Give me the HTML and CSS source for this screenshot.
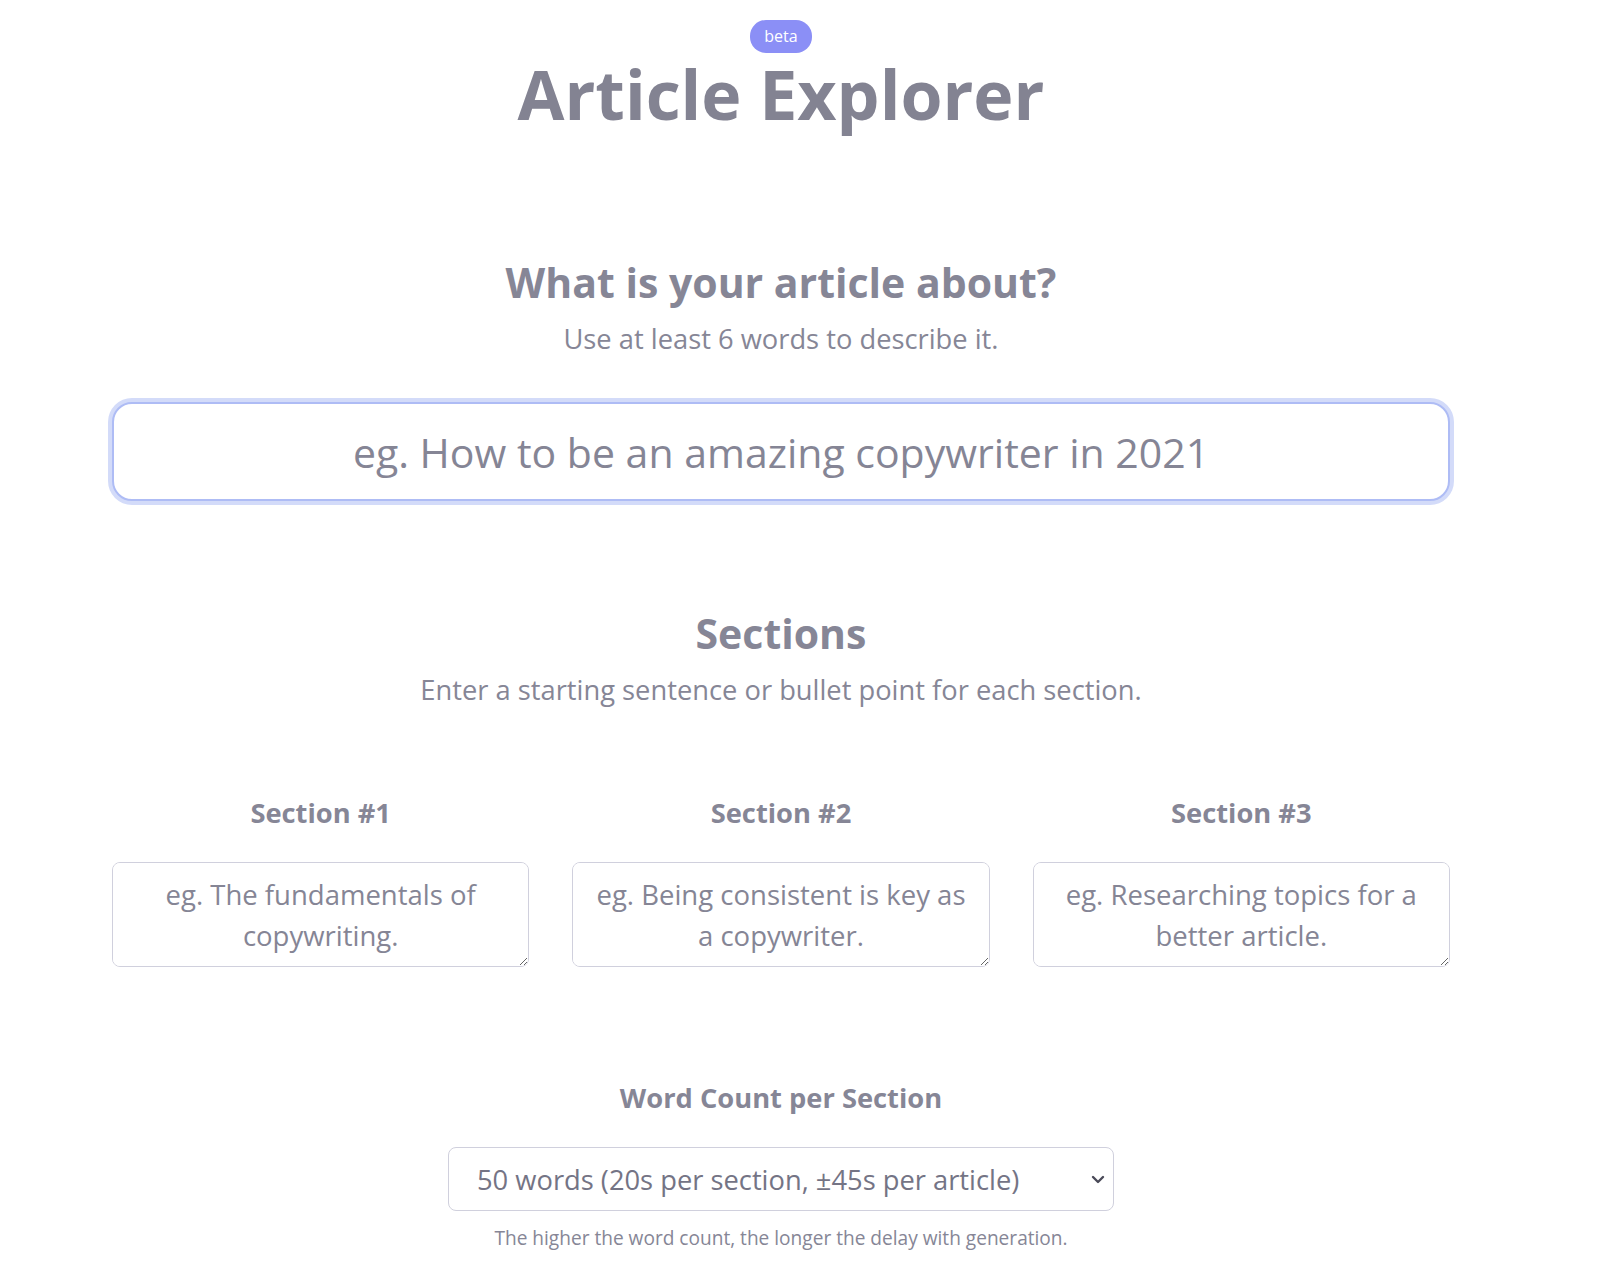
FILE: index.html
```html
<!DOCTYPE html>
<html lang="en">
<head>
<meta charset="utf-8">
<title>Article Explorer</title>
<link rel="stylesheet" href="styles.css">
</head>
<body>
<main class="page">
  <header class="header">
    <span class="badge">beta</span>
    <h1 class="title">Article Explorer</h1>
  </header>

  <section class="block topic">
    <h2 class="heading">What is your article about?</h2>
    <p class="lead">Use at least 6 words to describe it.</p>
    <input class="topic-input" type="text" placeholder="eg. How to be an amazing copywriter in 2021">
  </section>

  <section class="block sections">
    <h2 class="heading">Sections</h2>
    <p class="lead">Enter a starting sentence or bullet point for each section.</p>
    <div class="section-grid">
      <div class="field">
        <label class="label" for="s1">Section #1</label>
        <textarea id="s1" class="section-text" placeholder="eg. The fundamentals of copywriting."></textarea>
      </div>
      <div class="field">
        <label class="label" for="s2">Section #2</label>
        <textarea id="s2" class="section-text" placeholder="eg. Being consistent is key as a copywriter."></textarea>
      </div>
      <div class="field">
        <label class="label" for="s3">Section #3</label>
        <textarea id="s3" class="section-text" placeholder="eg. Researching topics for a better article."></textarea>
      </div>
    </div>
  </section>

  <section class="block count">
    <label class="label" for="wc">Word Count per Section</label>
    <div class="select-wrap">
      <select id="wc" class="select">
        <option>50 words (20s per section, ±45s per article)</option>
        <option>100 words</option>
      </select>
      <svg class="chevron" width="14" height="9" viewBox="0 0 14 9" aria-hidden="true">
        <path d="M2 2 L7 7 L12 2" fill="none" stroke="#4a4a58" stroke-width="2.4" stroke-linecap="round" stroke-linejoin="round"/>
      </svg>
    </div>
    <p class="hint">The higher the word count, the longer the delay with generation.</p>
  </section>
</main>
</body>
</html>
```

FILE: styles.css
```css
html, body {
  margin: 0;
  padding: 0;
  background: #ffffff;
}

body {
  font-family: "Open Sans", "Liberation Sans", sans-serif;
  color: #868696;
  padding-right: 38px;
}

.page {
  max-width: 1338px;
  margin: 0 auto;
  padding-top: 20px;
  text-align: center;
}

.header {
  display: flex;
  flex-direction: column;
  align-items: center;
}

.badge {
  display: inline-block;
  background: #8b8ff6;
  color: #ffffff;
  font-size: 16px;
  line-height: 21px;
  padding: 6px 14px;
  border-radius: 16px;
}

.title {
  margin: 1px 0 0;
  font-size: 68px;
  line-height: 79px;
  font-weight: 700;
  color: #838392;
}

.heading {
  margin: 0;
  font-size: 41px;
  line-height: 50px;
  font-weight: 700;
}

.lead {
  margin: 11px 0 0;
  font-size: 27.3px;
  line-height: 41px;
}

.topic {
  margin-top: 124px;
}

.topic-input {
  display: block;
  box-sizing: border-box;
  width: 100%;
  height: 99px;
  margin-top: 43px;
  border: 2px solid #aebcf5;
  border-radius: 20px;
  box-shadow: 0 0 0 4px #d3dbf9;
  outline: none;
  font-family: "Open Sans", "Liberation Sans", sans-serif;
  font-size: 41px;
  text-align: center;
  color: #6f6f80;
  background: #ffffff;
}

.topic-input::placeholder {
  color: #858595;
  opacity: 1;
}

.sections {
  margin-top: 107px;
}

.section-grid {
  display: grid;
  grid-template-columns: repeat(3, 1fr);
  gap: 43px;
  margin-top: 82px;
}

.field {
  display: flex;
  flex-direction: column;
}

.label {
  display: block;
  font-size: 27.3px;
  line-height: 41px;
  font-weight: 700;
}

.section-text {
  display: block;
  box-sizing: border-box;
  width: 100%;
  height: 105px;
  margin-top: 29px;
  padding: 11px 18px;
  border: 1px solid #d0d0dd;
  border-radius: 8px;
  font-family: "Open Sans", "Liberation Sans", sans-serif;
  font-size: 27.5px;
  line-height: 41px;
  text-align: center;
  color: #6f6f80;
  background: #ffffff;
  outline: none;
}

.section-text::placeholder {
  color: #858595;
  opacity: 1;
}

.count {
  margin-top: 110px;
}

.select-wrap {
  position: relative;
  width: 666px;
  margin: 29px auto 0;
}

.select {
  display: block;
  box-sizing: border-box;
  width: 100%;
  height: 64px;
  padding: 0 50px 0 28px;
  border: 1px solid #d0d0dd;
  border-radius: 8px;
  background: #ffffff;
  appearance: none;
  -webkit-appearance: none;
  font-family: "Open Sans", "Liberation Sans", sans-serif;
  font-size: 27.3px;
  color: #747485;
  outline: none;
}

.chevron {
  position: absolute;
  right: 9px;
  top: 28px;
  pointer-events: none;
}

.hint {
  margin: 14px 0 0;
  font-size: 19.1px;
  line-height: 27.5px;
}
```
